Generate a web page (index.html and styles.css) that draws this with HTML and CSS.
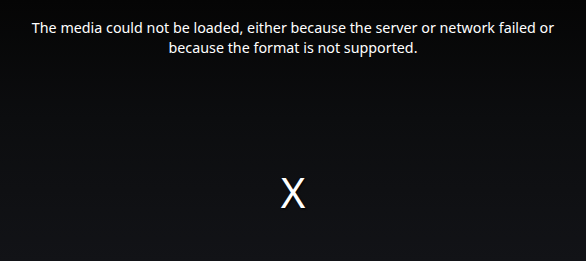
FILE: index.html
```html
<!DOCTYPE html>
<html>
<head>
<meta charset="utf-8">
<link rel="stylesheet" href="styles.css">
</head>
<body>
<div class="player">
  <p class="message">The media could not be loaded, either because the server or network failed or because the format is not supported.</p>
  <div class="close">X</div>
</div>
</body>
</html>
```
FILE: styles.css
```css
html, body {
  margin: 0;
  padding: 0;
  width: 586px;
  height: 261px;
  overflow: hidden;
}
.player {
  width: 586px;
  height: 261px;
  background: linear-gradient(to bottom, #050505 0%, #0c0d0f 45%, #121317 100%);
  display: flex;
  flex-direction: column;
  align-items: center;
  box-sizing: border-box;
  padding-top: 18px;
}
.message {
  margin: 0;
  width: 560px;
  color: #ffffff;
  font-family: "Noto Sans", "Open Sans", sans-serif;
  font-size: 14.3px;
  line-height: 20px;
  text-align: center;
}
.close {
  margin-top: 112px;
  color: #ffffff;
  font-family: "Noto Sans", sans-serif;
  font-size: 42px;
  line-height: 44px;
  text-shadow: 1px 1px 2px #000;
}
```
